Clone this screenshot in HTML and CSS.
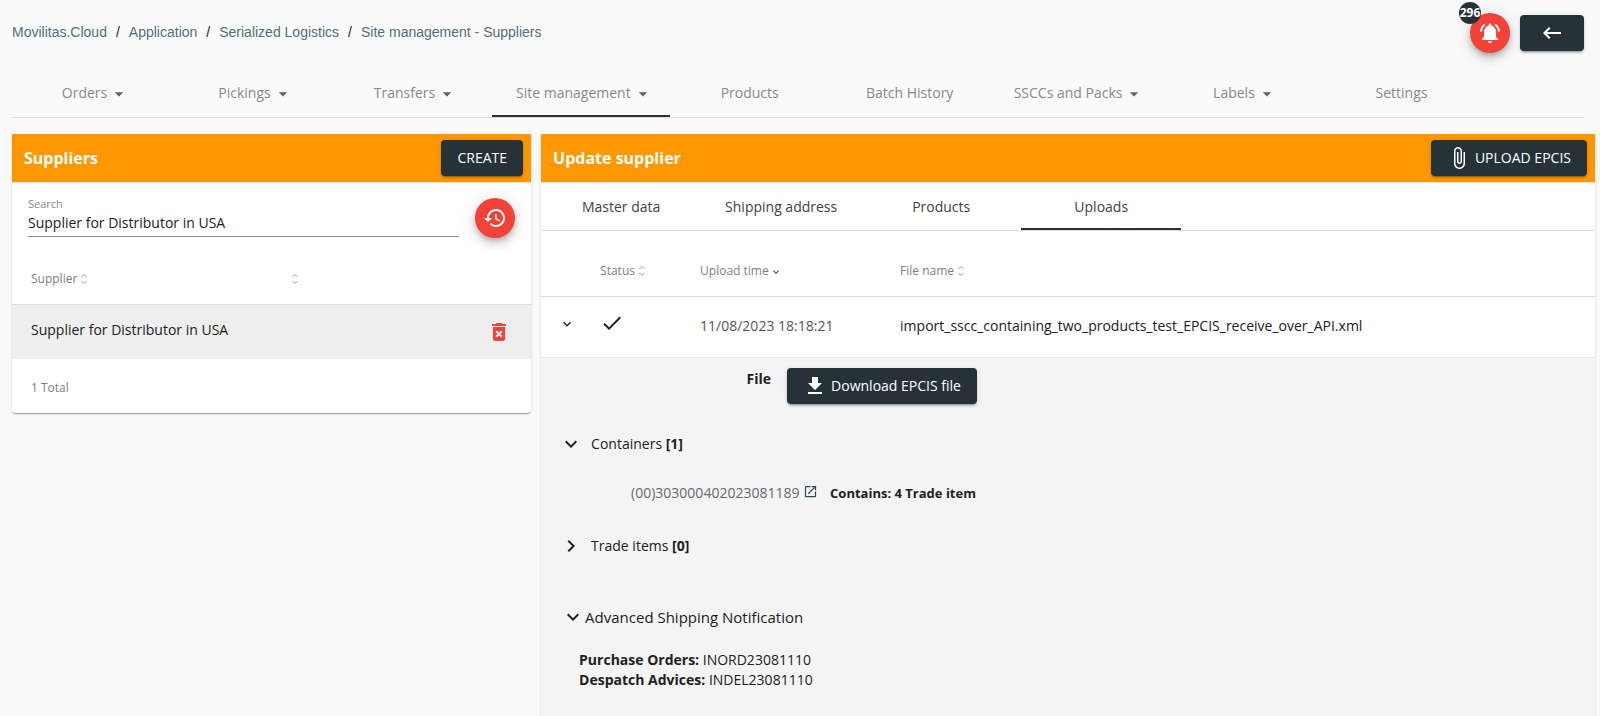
FILE: index.html
```html
<!DOCTYPE html>
<html lang="en">
<head>
    <meta charset="UTF-8">
    <meta name="viewport" content="width=device-width, initial-scale=1.0">
    <title>Site management - Suppliers</title>
    <link rel="stylesheet" href="styles.css">
</head>
<body>
    <svg class="sprite" aria-hidden="true">
        <symbol id="drop" viewBox="0 0 24 24"><path d="M7 10l5 5 5-5z"/></symbol>
        <symbol id="more" viewBox="0 0 24 24"><path d="M16.59 8.59L12 13.17 7.41 8.59 6 10l6 6 6-6z"/></symbol>
        <symbol id="right" viewBox="0 0 24 24"><path d="M8.59 16.59L13.17 12 8.59 7.41 10 6l6 6-6 6z"/></symbol>
        <symbol id="sort" viewBox="0 0 8 12"><path d="M1.5 4L4 1.5 6.5 4M1.5 8L4 10.5 6.5 8" fill="none" stroke="currentColor"/></symbol>
    </svg>

    <header class="topbar">
        <nav class="breadcrumb">
            <a href="#">Movilitas.Cloud</a>
            <span>/</span>
            <a href="#">Application</a>
            <span>/</span>
            <a href="#">Serialized Logistics</a>
            <span>/</span>
            <a href="#">Site management - Suppliers</a>
        </nav>
        <div class="top-actions">
            <div class="alerts">
                <button class="fab" aria-label="Notifications">
                    <svg class="icon" viewBox="0 0 24 24"><path d="M7.58 4.08L6.15 2.65C3.75 4.48 2.17 7.3 2.03 10.5h2c.15-2.65 1.51-4.97 3.55-6.42zm12.39 6.42h2c-.15-3.2-1.73-6.02-4.12-7.85l-1.42 1.43c2.02 1.45 3.39 3.77 3.54 6.42zM18 11c0-3.07-1.64-5.64-4.5-6.32V4c0-.83-.67-1.5-1.5-1.5s-1.5.67-1.5 1.5v.68C7.63 5.36 6 7.92 6 11v5l-2 2v1h16v-1l-2-2v-5zm-6 11c.14 0 .27-.01.4-.04.65-.14 1.18-.58 1.44-1.18.1-.24.15-.5.15-.78h-4c.01 1.1.9 2 2.01 2z"/></svg>
                </button>
                <span class="badge">296</span>
            </div>
            <button class="btn back" aria-label="Back">
                <svg class="icon" viewBox="0 0 24 24"><path d="M21 11H6.83l3.58-3.59L9 6l-6 6 6 6 1.41-1.41L6.83 13H21z"/></svg>
            </button>
        </div>
    </header>

    <nav class="tabs main-tabs">
        <a href="#">Orders <svg class="caret"><use href="#drop"/></svg></a>
        <a href="#">Pickings <svg class="caret"><use href="#drop"/></svg></a>
        <a href="#">Transfers <svg class="caret"><use href="#drop"/></svg></a>
        <a href="#" class="active">Site management <svg class="caret"><use href="#drop"/></svg></a>
        <a href="#">Products</a>
        <a href="#">Batch History</a>
        <a href="#">SSCCs and Packs <svg class="caret"><use href="#drop"/></svg></a>
        <a href="#">Labels <svg class="caret"><use href="#drop"/></svg></a>
        <a href="#">Settings</a>
    </nav>

    <main class="content">
        <section class="card suppliers">
            <div class="card-header">
                <h2>Suppliers</h2>
                <button class="btn">CREATE</button>
            </div>
            <div class="search-row">
                <div class="search-field">
                    <label for="search">Search</label>
                    <input type="text" id="search" value="Supplier for Distributor in USA" autocomplete="off">
                </div>
                <button class="fab" aria-label="Reset search">
                    <svg class="icon" viewBox="0 0 24 24"><path d="M13 3c-4.97 0-9 4.03-9 9H1l3.89 3.89.07.14L9 12H6c0-3.87 3.13-7 7-7s7 3.13 7 7-3.13 7-7 7c-1.93 0-3.68-.79-4.94-2.06l-1.42 1.42C8.27 19.99 10.51 21 13 21c4.97 0 9-4.03 9-9s-4.03-9-9-9zm-1 5v5l4.28 2.54.72-1.21-3.5-2.08V8H12z"/></svg>
                </button>
            </div>
            <table class="supplier-table">
                <thead>
                    <tr>
                        <th>Supplier <svg class="sort"><use href="#sort"/></svg></th>
                        <th><svg class="sort"><use href="#sort"/></svg></th>
                    </tr>
                </thead>
                <tbody>
                    <tr>
                        <td>Supplier for Distributor in USA</td>
                        <td class="actions">
                            <button class="icon-btn delete" aria-label="Delete">
                                <svg class="icon" viewBox="0 0 24 24"><path d="M6 19c0 1.1.9 2 2 2h8c1.1 0 2-.9 2-2V7H6v12zm2.46-7.12l1.41-1.41L12 12.59l2.12-2.12 1.41 1.41L13.41 14l2.12 2.12-1.41 1.41L12 15.41l-2.12 2.12-1.41-1.41L10.59 14l-2.13-2.12zM15.5 4l-1-1h-5l-1 1H5v2h14V4z"/></svg>
                            </button>
                        </td>
                    </tr>
                </tbody>
            </table>
            <p class="total">1 Total</p>
        </section>

        <section class="card detail">
            <div class="card-header">
                <h2>Update supplier</h2>
                <button class="btn">
                    <svg class="icon" viewBox="0 0 24 24"><path d="M16.5 6v11.5c0 2.21-1.79 4-4 4s-4-1.79-4-4V5c0-1.38 1.12-2.5 2.5-2.5s2.5 1.12 2.5 2.5v10.5c0 .55-.45 1-1 1s-1-.45-1-1V6H10v9.5c0 1.38 1.12 2.5 2.5 2.5s2.5-1.12 2.5-2.5V5c0-2.21-1.79-4-4-4S7 2.79 7 5v12.5c0 3.04 2.46 5.5 5.5 5.5s5.5-2.46 5.5-5.5V6h-1.5z"/></svg>
                    UPLOAD EPCIS
                </button>
            </div>
            <nav class="tabs detail-tabs">
                <a href="#">Master data</a>
                <a href="#">Shipping address</a>
                <a href="#">Products</a>
                <a href="#" class="active">Uploads</a>
            </nav>
            <table class="upload-table">
                <thead>
                    <tr>
                        <th class="col-toggle"></th>
                        <th class="col-status">Status <svg class="sort"><use href="#sort"/></svg></th>
                        <th class="col-time">Upload time <svg class="sort-down"><use href="#more"/></svg></th>
                        <th>File name <svg class="sort"><use href="#sort"/></svg></th>
                    </tr>
                </thead>
                <tbody>
                    <tr>
                        <td class="toggle-cell">
                            <button class="icon-btn" aria-label="Collapse row"><svg class="icon-small"><use href="#more"/></svg></button>
                        </td>
                        <td class="status-cell"><svg class="icon" viewBox="0 0 24 24"><path d="M9 16.17L4.83 12l-1.42 1.41L9 19 21 7l-1.41-1.41z"/></svg></td>
                        <td class="time">11/08/2023 18:18:21</td>
                        <td>import_sscc_containing_two_products_test_EPCIS_receive_over_API.xml</td>
                    </tr>
                </tbody>
            </table>

            <div class="upload-detail">
                <div class="file-row">
                    <b>File</b>
                    <button class="btn">
                        <svg class="icon" viewBox="0 0 24 24"><path d="M19 9h-4V3H9v6H5l7 7 7-7zM5 18v2h14v-2H5z"/></svg>
                        Download EPCIS file
                    </button>
                </div>
                <div class="tree-row">
                    <button class="icon-btn" aria-label="Collapse containers"><svg class="icon"><use href="#more"/></svg></button>
                    <span>Containers <b>[1]</b></span>
                </div>
                <div class="container-row">
                    <a href="#">(00)303000402023081189
                        <svg class="icon-link" viewBox="0 0 24 24"><path d="M19 19H5V5h7V3H5c-1.11 0-2 .9-2 2v14c0 1.1.89 2 2 2h14c1.1 0 2-.9 2-2v-7h-2v7zM14 3v2h3.59l-9.83 9.83 1.41 1.41L19 6.41V10h2V3h-7z"/></svg></a>
                    <b>Contains: 4 Trade item</b>
                </div>
                <div class="tree-row">
                    <button class="icon-btn" aria-label="Expand trade items"><svg class="icon"><use href="#right"/></svg></button>
                    <span>Trade items <b>[0]</b></span>
                </div>
                <div class="asn-title">
                    <button class="icon-btn" aria-label="Collapse notification"><svg class="icon"><use href="#more"/></svg></button>
                    <span>Advanced Shipping Notification</span>
                </div>
                <div class="asn-body">
                    <div><b>Purchase Orders:</b> INORD23081110</div>
                    <div><b>Despatch Advices:</b> INDEL23081110</div>
                </div>
            </div>
        </section>
    </main>
</body>
</html>
```

FILE: styles.css
```css
* {
    box-sizing: border-box;
}

body {
    display: flex;
    flex-direction: column;
    min-height: 100vh;
    margin: 0;
    background: #fafafa;
    color: #212121;
    font-family: "Open Sans", sans-serif;
    font-size: 14px;
    font-weight: 400;
    line-height: 20px;
}

a {
    color: inherit;
    text-decoration: none;
}

b {
    font-weight: 700;
}

button {
    font-family: inherit;
    cursor: pointer;
}

svg {
    fill: currentColor;
    flex-shrink: 0;
}

.sprite {
    display: none;
}

.icon {
    width: 24px;
    height: 24px;
}

/* top bar */
.topbar {
    display: flex;
    justify-content: space-between;
    align-items: center;
    height: 66px;
    padding: 0 16px 0 12px;
}

.breadcrumb {
    display: flex;
    gap: 9px;
    padding-bottom: 2px;
    font-family: "Liberation Sans", Arial, sans-serif;
    color: #212121;
}

.breadcrumb a {
    color: #546e7a;
}

.top-actions {
    display: flex;
    align-items: center;
    gap: 10px;
}

.alerts {
    position: relative;
}

.badge {
    position: absolute;
    top: -11px;
    left: -11px;
    width: 22px;
    height: 22px;
    border-radius: 50%;
    background: #263238;
    color: #fff;
    font-size: 12px;
    font-weight: 700;
    line-height: 22px;
    text-align: center;
}

.fab {
    display: flex;
    align-items: center;
    justify-content: center;
    width: 40px;
    height: 40px;
    padding: 0;
    border: 0;
    border-radius: 50%;
    background: #f44336;
    color: #fff;
    box-shadow: 0 3px 5px -1px rgba(0, 0, 0, 0.2), 0 6px 10px rgba(0, 0, 0, 0.14), 0 1px 18px rgba(0, 0, 0, 0.12);
}

.btn {
    display: flex;
    align-items: center;
    justify-content: center;
    gap: 4px;
    height: 36px;
    padding: 0 16px;
    border: 0;
    border-radius: 4px;
    background: #263238;
    color: #fff;
    font-size: 14px;
    font-weight: 500;
    line-height: 20px;
    white-space: nowrap;
    box-shadow: 0 3px 1px -2px rgba(0, 0, 0, 0.2), 0 2px 2px rgba(0, 0, 0, 0.14), 0 1px 5px rgba(0, 0, 0, 0.12);
}

.back {
    width: 64px;
}

.icon-btn {
    display: inline-flex;
    padding: 0;
    border: 0;
    background: none;
    color: inherit;
}

/* tabs */
.tabs {
    display: flex;
    border-bottom: 1px solid #dcdcdc;
}

.tabs a {
    display: flex;
    align-items: center;
    justify-content: center;
    min-width: 160px;
    height: 48px;
    padding: 0 24px;
    border-top: 2px solid transparent;
    border-bottom: 2px solid transparent;
    white-space: nowrap;
}

.tabs a.active {
    border-bottom-color: #263238;
}

.main-tabs {
    margin: 3px 16px 16px 12px;
    color: #888;
}

.caret {
    width: 20px;
    height: 20px;
    margin: 2px -7px 0 2px;
    color: #616161;
}

/* cards */
.content {
    display: grid;
    grid-template-columns: 33fr 67fr;
    gap: 10px;
    flex: 1;
    align-items: start;
    padding: 0 5px 0 12px;
}

.card {
    background: #fff;
    border-radius: 0 0 4px 4px;
    box-shadow: 0 2px 1px -1px rgba(0, 0, 0, 0.2), 0 1px 1px rgba(0, 0, 0, 0.14), 0 1px 3px rgba(0, 0, 0, 0.12);
}

.card-header {
    display: flex;
    align-items: center;
    justify-content: space-between;
    height: 49px;
    padding: 0 8px 0 12px;
    background: #ff9800;
    border-bottom: 1px solid #e0e0e0;
    color: #fff;
}

.card-header h2 {
    margin: 0;
    font-size: 16px;
    font-weight: 700;
}

.search-row {
    display: flex;
    gap: 16px;
    padding: 15px 16px 16px;
}

.search-field {
    flex: 1;
    height: 39px;
    border-bottom: 1px solid #8c8c8c;
}

.search-field label {
    display: block;
    color: #888;
    font-size: 11px;
    line-height: 11px;
}

.search-field input {
    display: block;
    width: 100%;
    height: 26px;
    padding: 0;
    border: 0;
    outline: none;
    background: none;
    color: #212121;
    font: inherit;
}

table {
    width: 100%;
    border-collapse: separate;
    border-spacing: 0;
    table-layout: fixed;
}

th {
    padding: 0 19px;
    border-bottom: 1px solid #dcdcdc;
    color: #808080;
    font-size: 12px;
    font-weight: 400;
    text-align: left;
}

td {
    padding: 0 19px;
}

.sort {
    width: 8px;
    height: 12px;
    color: #9e9e9e;
    vertical-align: -2px;
}

.sort-down {
    width: 12px;
    height: 12px;
    margin-left: -2px;
    color: #424242;
    vertical-align: -3px;
}

.supplier-table th {
    height: 51px;
}

.supplier-table td {
    height: 54px;
    padding-bottom: 4px;
    background: #eee;
}

.supplier-table .actions {
    padding: 0 20px 0 0;
    text-align: right;
}

.delete {
    color: #f44336;
    vertical-align: middle;
}

.total {
    margin: 0;
    padding: 19px 19px 15px;
    color: #808080;
    font-size: 12px;
}

/* supplier detail */
.detail {
    align-self: stretch;
    background: #f4f4f4;
}

.detail-tabs {
    background: #fff;
    color: #424242;
}

.detail-tabs a {
    height: 47px;
}

.upload-table {
    background: #fff;
}

.upload-table th {
    height: 66px;
    padding: 14px 0 0;
}

.upload-table td {
    height: 61px;
    padding: 0 0 2px;
    border-bottom: 1px solid #e8e8e8;
}

.col-toggle {
    width: 59px;
}

.col-status {
    width: 100px;
}

.col-time {
    width: 200px;
}

.upload-table .toggle-cell {
    padding-left: 18px;
}

.icon-small {
    width: 16px;
    height: 16px;
}

.upload-table .status-cell {
    padding-bottom: 8px;
}

.status-cell .icon {
    display: block;
}

.time {
    color: #555;
}

.upload-detail {
    padding: 10px 16px;
}

.file-row {
    display: grid;
    grid-template-columns: 214px auto;
    justify-content: start;
    gap: 16px;
    line-height: 22px;
    text-align: right;
}

.tree-row {
    display: flex;
    align-items: center;
    gap: 8px;
    height: 40px;
    padding-left: 2px;
}

.file-row + .tree-row {
    margin-top: 20px;
}

.container-row {
    display: flex;
    align-items: center;
    gap: 12px;
    height: 58px;
    margin-bottom: 4px;
    padding-left: 74px;
}

.container-row a {
    color: #5f6b72;
}

.container-row b {
    font-size: 13px;
}

.icon-link {
    width: 15px;
    height: 15px;
    color: #37474f;
    vertical-align: -1px;
}

.asn-title {
    display: flex;
    align-items: center;
    height: 40px;
    margin-top: 31px;
    padding-left: 4px;
    font-size: 15px;
}

.asn-body {
    padding: 13px 22px 24px;
}
```
